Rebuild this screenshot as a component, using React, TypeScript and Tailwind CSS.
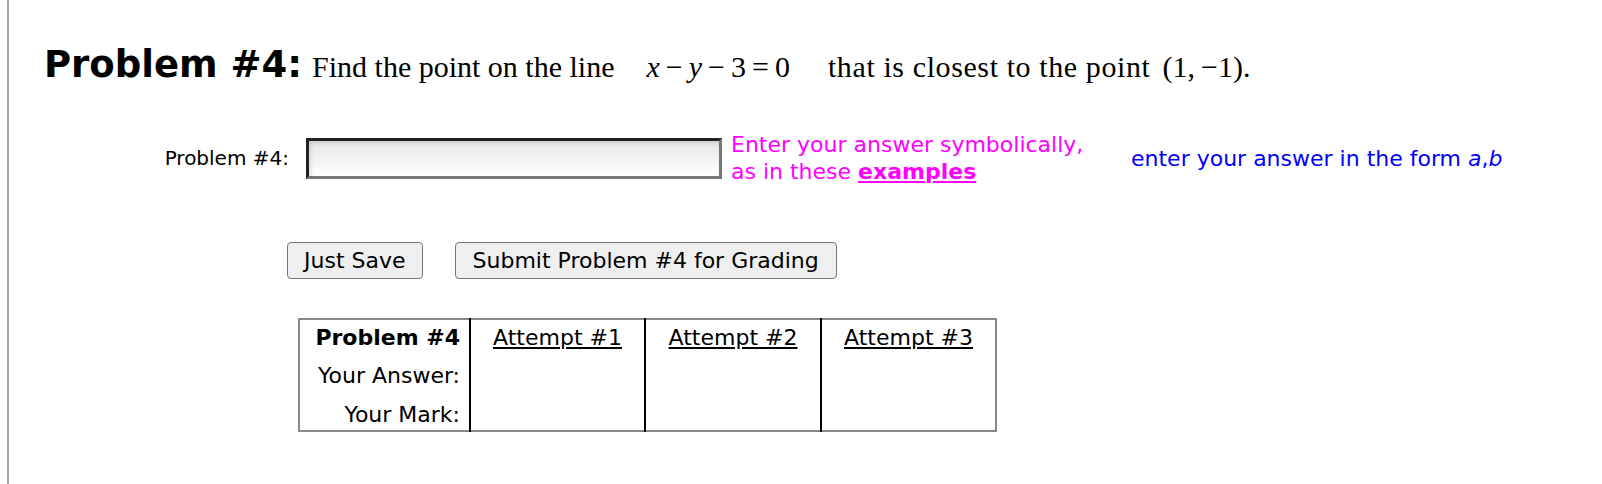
import React from "react";

const verdana = "font-['DejaVu_Sans',Verdana,sans-serif]";
const times = "font-['Liberation_Serif','Times_New_Roman',serif]";

const Minus = () => <span className="mx-[6px]">−</span>;

export default function App() {
    return (
        <div className="min-h-[484px] w-[1602px] bg-white text-black">
            <div className="ml-[7px] min-h-[484px] border-l-[2px] border-[#a3a3a3] pl-[35px] pt-[42px]">
                {/* question */}
                <div className="flex items-baseline whitespace-nowrap">
                    <span className={`${verdana} text-[37px] font-bold leading-[46px]`}>Problem #4:</span>
                    <span className={`${times} ml-[10px] text-[30px]`}>
                        Find the point on the line
                        <i className="ml-[32px]">x</i><Minus /><i>y</i><Minus />3<span className="mx-[6px]">=</span>0
                        <span className="ml-[38px] tracking-[0.6px]">that is closest to the point</span>
                        <span className="ml-[12px]">(1,</span>
                        <span className="ml-[6px]">−1).</span>
                    </span>
                </div>

                {/* answer row */}
                <div className={`${verdana} mt-[42px] flex items-center`}>
                    <label className="w-[262px] pr-[17px] text-right text-[20px]">Problem #4:</label>
                    <input
                        type="text"
                        className="h-[41px] w-[416px] border-[3px] border-t-[#222] border-l-[#222] border-b-[#777] border-r-[#777] bg-gradient-to-b from-[#e6e6e6] to-white shadow-[inset_2px_2px_4px_rgba(0,0,0,0.12)] outline-none"
                    />
                    <div className="ml-[9px] w-[400px] text-[22px] leading-[27px] text-[#ff00ff]">
                        <div>Enter your answer symbolically,</div>
                        <div>
                            as in these{" "}
                            <a href="#" className="font-bold underline">examples</a>
                        </div>
                    </div>
                    <div className="text-[22px] text-[#0000ff]">
                        enter your answer in the form <i>a</i>,<i>b</i>
                    </div>
                </div>

                {/* buttons */}
                <div className={`${verdana} ml-[243px] mt-[57px] flex gap-[32px] text-[22px]`}>
                    <button className="h-[37px] rounded-[4px] border border-[#777] bg-[#efefef] px-[16px]">Just Save</button>
                    <button className="h-[37px] rounded-[4px] border border-[#777] bg-[#efefef] px-[17px]">
                        Submit Problem #4 for Grading
                    </button>
                </div>

                {/* attempts */}
                <table className={`${verdana} ml-[254px] mt-[39px] border-2 border-[#888] text-[22px] leading-[28px]`}>
                    <tbody>
                        <tr>
                            <th className="h-[36px] w-[171px] border-r-2 border-black pr-[9px] text-right font-bold">Problem #4</th>
                            <td className="w-[175px] border-r-2 border-black text-center"><a href="#" className="underline">Attempt #1</a></td>
                            <td className="w-[176px] border-r-2 border-black text-center"><a href="#" className="underline">Attempt #2</a></td>
                            <td className="w-[175px] text-center"><a href="#" className="underline">Attempt #3</a></td>
                        </tr>
                        <tr>
                            <td className="h-[41px] border-r-2 border-black pr-[9px] text-right">Your Answer:</td>
                            <td className="border-r-2 border-black"></td>
                            <td className="border-r-2 border-black"></td>
                            <td></td>
                        </tr>
                        <tr>
                            <td className="h-[35px] border-r-2 border-black pr-[9px] pt-[3px] text-right">Your Mark:</td>
                            <td className="border-r-2 border-black"></td>
                            <td className="border-r-2 border-black"></td>
                            <td></td>
                        </tr>
                    </tbody>
                </table>
            </div>
        </div>
    );
}
